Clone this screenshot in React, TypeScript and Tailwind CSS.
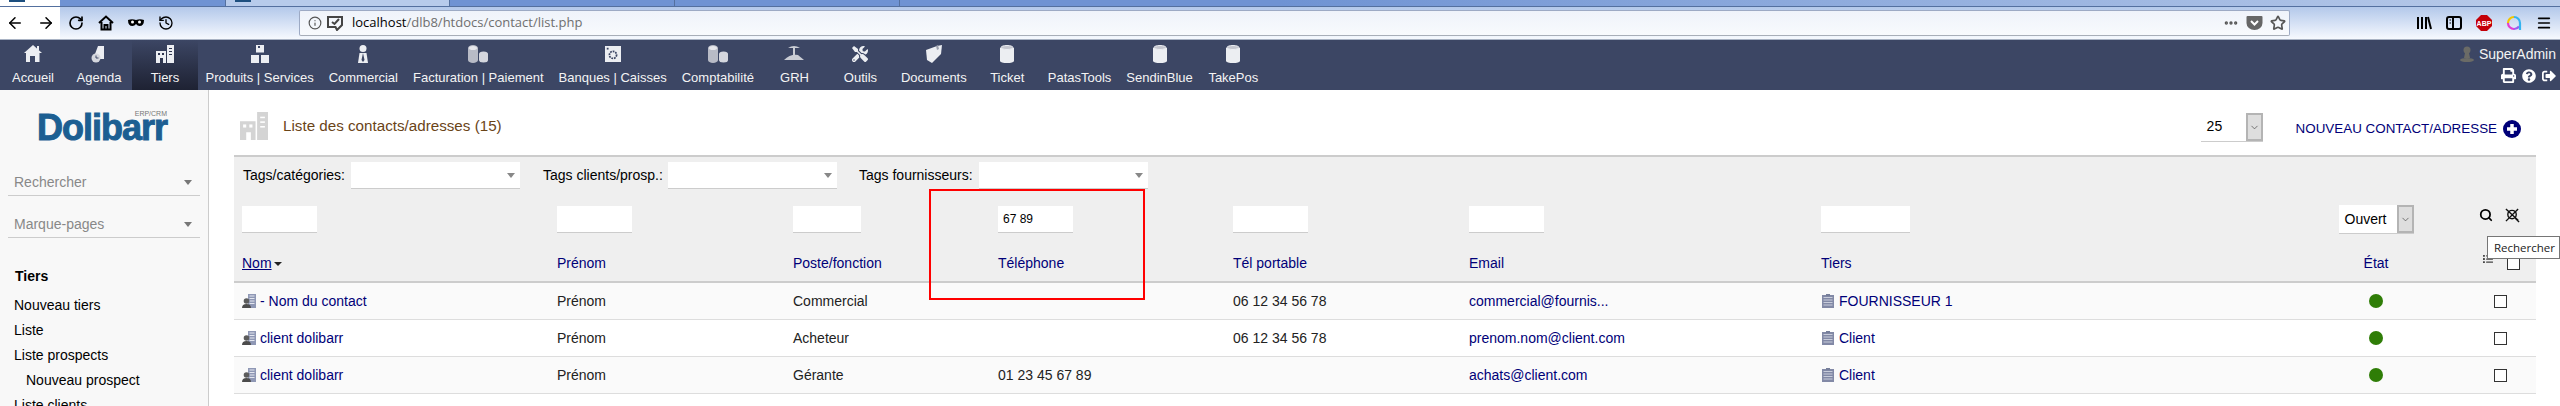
import React from 'react';
import { ArrowLeft, ArrowRight, RotateCw, History, Info, MoreHorizontal, Star, Menu, ChevronDown, Search } from 'lucide-react';
import { FaTools, FaPrint, FaQuestionCircle, FaSignOutAlt, FaList } from 'react-icons/fa';

const IconHome = () => (
  <svg viewBox="0 0 18 18" className="w-[18px] h-[18px]" fill="#eceef2">
    <path d="M9 0 18 8h-2.500v9H11v-6H6v6H2V8H0z" />
    <rect x="13" y="1" width="2" height="4" />
  </svg>
);

const IconAgenda = () => (
  <svg viewBox="0 0 18 18" className="w-[18px] h-[18px]" fill="#eceef2">
    <path d="M8 1h6v13H9a5 5 0 0 0-4-5z" />
    <circle cx="6" cy="13" r="4.500" fill="#d5d7de" />
    <path d="M6 10.500V13h2.500" fill="none" stroke="#3c4664" />
  </svg>
);

const IconTiers = ({ fill = '#eceef2', cut = '#3c4664' }: { fill?: string; cut?: string }) => (
  <svg viewBox="0 0 18 18" className="w-[18px] h-[18px]" fill={fill}>
    <path d="M0 6h10v12H7v-5H4v5H0z" />
    <rect x="11" y="0" width="7" height="18" />
    <rect x="2" y="8" width="2" height="2" fill={cut} />
    <rect x="6" y="8" width="2" height="2" fill={cut} />
    <rect x="13" y="3" width="3" height="1" fill={cut} />
    <rect x="13" y="6" width="3" height="1" fill={cut} />
    <rect x="13" y="9" width="3" height="1" fill={cut} />
  </svg>
);

const IconProducts = () => (
  <svg viewBox="0 0 18 18" className="w-[18px] h-[18px]" fill="#eceef2">
    <rect x="5" y="0" width="8" height="7.500" />
    <rect x="0" y="10" width="8" height="8" />
    <rect x="10" y="10" width="8" height="8" />
    <rect x="7" y="1" width="2" height="2" fill="#3c4664" />
  </svg>
);

const IconCommercial = () => (
  <svg viewBox="0 0 18 18" className="w-[18px] h-[18px]" fill="#eceef2">
    <circle cx="9" cy="3.500" r="3.500" />
    <path d="M5.500 8h7l1.500 10H4z" />
    <path d="M9 8l1.500 7L9 17l-1.500-2z" fill="#3c4664" />
  </svg>
);

const IconCoins = () => (
  <svg viewBox="0 0 20 18" className="w-[20px] h-[18px]" fill="#b8bbc6">
    <path d="M0 3a5 3 0 0 1 10 0v12a5 3 0 0 1-10 0z" />
    <path d="M11 9a4.500 2.500 0 0 1 9 0v6a4.500 2.500 0 0 1-9 0z" fill="#d5d7de" />
    <ellipse cx="5" cy="3" rx="4" ry="2" fill="#e6e7ec" />
  </svg>
);

const IconBank = () => (
  <svg viewBox="0 0 18 18" className="w-[16px] h-[16px]">
    <rect width="18" height="18" fill="#eceef2" />
    <circle cx="9" cy="10" r="4" fill="none" stroke="#3c4664" strokeWidth="2" strokeDasharray="2 1" />
    <rect x="2" y="2" width="2" height="2" fill="#3c4664" />
  </svg>
);

const IconIsland = () => (
  <svg viewBox="0 0 20 18" className="w-[20px] h-[18px]" fill="#c9ccd4">
    <path d="M4 3Q10-1 16 3l-5 0-1 3-1-3z" />
    <rect x="9" y="3" width="2" height="7" />
    <path d="M0 15Q6 9 14 10l6 5z" />
  </svg>
);

const IconFolder = () => (
  <svg viewBox="0 0 18 18" className="w-[18px] h-[18px]" fill="#eceef2">
    <path d="M1 5 12 1l5-1-1 9-9 9-5-3z" />
    <path d="M11 1l2-1 1 4-2 1z" fill="#9da1ae" />
  </svg>
);

const IconCylinder = () => (
  <svg viewBox="0 0 14 18" className="w-[14px] h-[18px]">
    <path d="M0 3v13a7 2 0 0 0 14 0V3z" fill="#eceef2" />
    <ellipse cx="7" cy="2.500" rx="6" ry="2" fill="#c4c6cf" stroke="#eceef2" />
  </svg>
);

const navItems: { label: string; icon?: React.ReactNode; active?: boolean }[] = [
  { label: 'Accueil', icon: <IconHome /> },
  { label: 'Agenda', icon: <IconAgenda /> },
  { label: 'Tiers', icon: <IconTiers cut="#2f3650" />, active: true },
  { label: 'Produits | Services', icon: <IconProducts /> },
  { label: 'Commercial', icon: <IconCommercial /> },
  { label: 'Facturation | Paiement', icon: <IconCoins /> },
  { label: 'Banques | Caisses', icon: <IconBank /> },
  { label: 'Comptabilité', icon: <IconCoins /> },
  { label: 'GRH', icon: <IconIsland /> },
  { label: 'Outils', icon: <FaTools className="w-[16px] h-[16px] text-[#eceef2]" /> },
  { label: 'Documents', icon: <IconFolder /> },
  { label: 'Ticket', icon: <IconCylinder /> },
  { label: 'PatasTools' },
  { label: 'SendinBlue', icon: <IconCylinder /> },
  { label: 'TakePos', icon: <IconCylinder /> },
];

const IconContact = () => (
  <svg viewBox="0 0 14 14" className="w-[14px] h-[14px] shrink-0">
    <rect x="6" y="0" width="8" height="14" fill="#8f98b5" />
    <path d="M7.500 2h5M7.500 4.500h5M7.500 7h5M7.500 9.500h5" stroke="#e4e7f0" />
    <circle cx="4.500" cy="7" r="2.800" fill="#5c5c5c" />
    <path d="M0 14q0-4 4.500-4T9 14z" fill="#4c4c4c" />
  </svg>
);

const IconCompany = () => (
  <svg viewBox="0 0 14 14" className="w-[14px] h-[14px] shrink-0">
    <rect x="1" y="1" width="12" height="13" fill="#8289a6" />
    <path d="M2.500 3.500h9M2.500 6h9M2.500 8.500h9M2.500 11h9" stroke="#c9cddb" />
    <rect x="5" y="0" width="4" height="2" fill="#767e9a" />
  </svg>
);

const FakeSelect = ({ className }: { className: string }) => (
  <div className={`bg-white border-b border-[#ccc] h-[27px] flex items-center justify-end pr-[5px] ${className}`}>
    <div className="w-0 h-0 border-x-[4px] border-x-transparent border-t-[5px] border-t-[#888]" />
  </div>
);

const FilterInput = ({ value, className = 'w-[75px]' }: { value?: string; className?: string }) => (
  <div className={`bg-white border-b border-[#ccc] h-[27px] pl-[5px] text-[12px] leading-[27px] text-black ${className}`}>{value}</div>
);

const SelectArrow = () => (
  <div className="w-[17px] self-stretch bg-[#dedede] border-2 border-[#b4b4b4] flex items-center justify-center">
    <ChevronDown className="w-[11px] h-[11px] text-[#444]" strokeWidth={1.5} />
  </div>
);

const Checkbox = () => <div className="w-[13px] h-[13px] border border-[#333] bg-white" />;

const Dot = () => <div className="w-[14px] h-[14px] rounded-full bg-[#2f7d07]" />;

const gridCols = 'grid grid-cols-[315px_236px_205px_235px_236px_352px_505px_100px_102px] items-center';

const headers = ['Prénom', 'Poste/fonction', 'Téléphone', 'Tél portable', 'Email', 'Tiers'];

const rows = [
  { nom: '- Nom du contact', poste: 'Commercial', tel: '', portable: '06 12 34 56 78', email: 'commercial@fournis...', tiers: 'FOURNISSEUR 1' },
  { nom: 'client dolibarr', poste: 'Acheteur', tel: '', portable: '06 12 34 56 78', email: 'prenom.nom@client.com', tiers: 'Client' },
  { nom: 'client dolibarr', poste: 'Gérante', tel: '01 23 45 67 89', portable: '', email: 'achats@client.com', tiers: 'Client' },
];

const BrowserBar = () => (
  <div className="h-[40px] shrink-0 flex flex-col border-b border-[#a9b3c4]">
    <div className="h-[7px] flex shrink-0 bg-gradient-to-r from-[#6f93d3] via-[#6f93d3] to-[#b9cbe9] border-b border-[#54709f]">
      <div className="w-[60px] bg-white pl-[9px]"><div className="w-[16px] h-[2px] bg-[#1d4f7f]" /></div>
      <div className="w-[165px]" />
      <div className="w-[225px] bg-[#b7cbeb] pl-[9px] border-x border-[#54709f]"><div className="w-[16px] h-[2px] bg-[#1d4f7f]" /></div>
      <div className="w-[225px] border-r border-[#54709f]" />
      <div className="w-[225px] border-r border-[#54709f]" />
    </div>
    <div className="flex-1 flex items-center bg-gradient-to-b from-[#b3c8ea] to-[#f6f9fe] text-black relative">
      <div className="w-[60px] self-stretch bg-white flex items-center gap-[13px] pl-[6px]">
        <ArrowLeft className="w-[18px] h-[18px]" strokeWidth={2} />
        <ArrowRight className="w-[18px] h-[18px]" strokeWidth={2} />
      </div>
      <div className="flex items-center gap-[14px] pl-[8px]">
        <RotateCw className="w-[16px] h-[16px]" strokeWidth={2.500} />
        <svg viewBox="0 0 16 16" className="w-[16px] h-[16px]" fill="none" stroke="black" strokeWidth="2">
          <path d="M1 8 8 1.500 15 8M3.500 7v7.500h9V7M6.500 14.500V10h3v4.500" />
        </svg>
        <svg viewBox="0 0 16 16" className="w-[16px] h-[16px]" fill="black">
          <path d="M0 5q4-1.500 8 0 4-1.500 8 0 0 6-4.500 6Q9.500 11 8 9q-1.500 2-3.500 2Q0 11 0 5z" />
          <circle cx="4.500" cy="7" r="1.500" fill="white" />
          <circle cx="11.500" cy="7" r="1.500" fill="white" />
        </svg>
        <History className="w-[16px] h-[16px]" strokeWidth={2} />
      </div>
      <div className="ml-[125px] flex-1 h-[26px] bg-gradient-to-b from-[#eff3fa] to-[#f8fafd] border border-[#9daac4] border-b-[#a8aeb8] rounded-[2px] flex items-center pl-[8px] pr-[3px]">
        <Info className="w-[14px] h-[14px] text-[#555]" strokeWidth={2} />
        <svg viewBox="0 0 16 16" className="w-[16px] h-[16px] ml-[5px]">
          <path d="M1 2h14v8l-5 5-1.500-3H1z" fill="none" stroke="#444" strokeWidth="2" />
          <path d="M5 7l2.500 2L12 4" fill="none" stroke="#444" strokeWidth="2" />
        </svg>
        <div className="ml-[9px] text-[13px] font-['Open_Sans','Noto_Sans',sans-serif] text-[#6f6f6f]">
          <span className="text-black">localhost</span>/dlb8/htdocs/contact/list.php
        </div>
        <div className="ml-auto flex items-center gap-[7px]">
          <MoreHorizontal className="w-[16px] h-[16px] text-[#555]" strokeWidth={3} />
          <svg viewBox="0 0 16 16" className="w-[17px] h-[16px]">
            <path d="M1 1h14a1 1 0 0 1 1 1v6a8 7 0 0 1-16 0V2a1 1 0 0 1 1-1z" fill="#666" />
            <path d="M4.500 6 8 9.500 11.500 6" fill="none" stroke="white" strokeWidth="2" />
          </svg>
          <Star className="w-[16px] h-[16px] text-[#555]" strokeWidth={2.500} />
        </div>
      </div>
      <div className="ml-[126px] flex items-center gap-[14px] pr-[8px]">
        <svg viewBox="0 0 16 16" className="w-[16px] h-[16px]" fill="none" stroke="black" strokeWidth="2">
          <path d="M2 2v12M6 2v12M10 2v12M12 2l3 12" />
        </svg>
        <svg viewBox="0 0 16 16" className="w-[16px] h-[16px]" fill="none" stroke="black" strokeWidth="2">
          <rect x="1" y="2" width="14" height="12" rx="2" />
          <path d="M7 2v12" />
          <path d="M3.500 5H5M3.500 8H5" strokeWidth="1" />
        </svg>
        <svg viewBox="0 0 16 16" className="w-[16px] h-[16px]">
          <path d="M5 0h6l5 5v6l-5 5H5l-5-5V5z" fill="#c40008" />
          <text x="8" y="10.500" textAnchor="middle" fontSize="7" fontWeight="700" fill="white" fontFamily="Liberation Sans">ABP</text>
        </svg>
        <svg viewBox="0 0 16 16" className="w-[16px] h-[16px]" fill="none" strokeWidth="2.200">
          <path d="M8 2A6 6 0 0 0 2 8" stroke="#f3c500" />
          <path d="M2 8a6 6 0 0 0 6 6" stroke="#e23fd0" />
          <path d="M8 14a6 6 0 0 0 5-2.500" stroke="#9b5cf0" />
          <path d="M8 2a6 6 0 0 1 6 6v7" stroke="#33b4f0" />
        </svg>
        <Menu className="w-[16px] h-[16px]" strokeWidth={2.500} />
      </div>
    </div>
  </div>
);

const TopNav = () => (
  <div className="h-[50px] shrink-0 bg-[#3c4664] flex text-white">
    {navItems.map((item, i) => (
      <div
        key={i}
        className={`min-w-[66px] px-[7.500px] flex flex-col items-center ${item.active ? 'bg-gradient-to-b from-[#3c4664] to-[#1e2233]' : ''}`}
      >
        <div className="h-[18px] mt-[5px] flex items-center justify-center">{item.icon}</div>
        <div className="mt-[7px] text-[13px] leading-[16px] whitespace-nowrap text-[#f4f4f4]">{item.label}</div>
      </div>
    ))}
    <div className="ml-auto pr-[4px] flex flex-col items-end">
      <div className="mt-[5px] flex items-center gap-[5px] h-[18px]">
        <svg viewBox="0 0 14 16" className="w-[14px] h-[16px]" fill="#6b6b66">
          <circle cx="7" cy="4" r="3.500" />
          <path d="M5 7h4l1 5H4z" />
          <ellipse cx="7" cy="14" rx="7" ry="2" />
        </svg>
        <span className="text-[14px] leading-[18px] text-[#f4f4f4]">SuperAdmin</span>
      </div>
      <div className="mt-[5px] flex items-center gap-[6px] text-white">
        <FaPrint className="w-[15px] h-[15px]" />
        <FaQuestionCircle className="w-[14px] h-[14px]" />
        <FaSignOutAlt className="w-[14px] h-[14px]" />
      </div>
    </div>
  </div>
);

const Sidebar = () => (
  <div className="w-[209px] shrink-0 bg-[#f8f8f8] border-r border-[#ccc] pt-[22px] text-[14px] text-black">
    <div className="relative h-[32px] w-[130px] ml-[37px]">
      <div className="text-[36px] leading-[32px] font-bold tracking-[-1px] text-[#1c5f92] [-webkit-text-stroke:1px_#1c5f92] whitespace-nowrap">Dolibarr</div>
      <div className="absolute right-0 -top-[2px] text-[7px] leading-[8px] text-[#777]">ERP/CRM</div>
    </div>
    <div className="mx-[8px] mt-[23px] h-[29px] border-b border-[#ccc] flex items-center justify-between pl-[6px] pr-[8px] pt-[3px] text-[#888]">
      <span>Rechercher</span>
      <div className="w-0 h-0 border-x-[4px] border-x-transparent border-t-[5px] border-t-[#777]" />
    </div>
    <div className="mx-[8px] mt-[13px] h-[29px] border-b border-[#ccc] flex items-center justify-between pl-[6px] pr-[8px] pt-[3px] text-[#888]">
      <span>Marque-pages</span>
      <div className="w-0 h-0 border-x-[4px] border-x-transparent border-t-[5px] border-t-[#777]" />
    </div>
    <div className="mt-[28px] pl-[15px] font-bold leading-[20px]">Tiers</div>
    <div className="mt-[7px] pl-[14px] leading-[25px]">
      <div>Nouveau tiers</div>
      <div>Liste</div>
      <div>Liste prospects</div>
      <div className="pl-[12px]">Nouveau prospect</div>
      <div>Liste clients</div>
    </div>
  </div>
);

const ListTable = () => (
  <div className="ml-[25px] mr-[24px] relative text-[14px]">
    <div className="h-[65px] flex items-center">
      <div className="ml-[6px] mt-[6px] w-[28px] h-[28px] [&>svg]:w-[28px] [&>svg]:h-[28px]">
        <IconTiers fill="#d4d4d4" cut="white" />
      </div>
      <div className="ml-[15px] mt-[7px] text-[#6a4418] text-[15.200px]">Liste des contacts/adresses (15)</div>
      <div className="ml-auto flex items-stretch h-[29px] w-[62px] border-b border-[#ccc] mt-[10px]">
        <span className="flex-1 pl-[6px] leading-[27px] text-black">25</span>
        <SelectArrow />
      </div>
      <div className="ml-[33px] text-[#000078] text-[13.400px] mt-[13px]">NOUVEAU CONTACT/ADRESSE</div>
      <svg viewBox="0 0 18 18" className="w-[18px] h-[18px] ml-[6px] mr-[15px] mt-[13px]">
        <circle cx="9" cy="9" r="9" fill="#000078" />
        <path d="M9 4v10M4 9h10" stroke="white" strokeWidth="3.500" />
      </svg>
    </div>

    <div className="bg-[#efefef] border-t-2 border-[#ccc] border-b-2 border-b-[#ccc] text-black">
      <div className="flex items-center mt-[5px] pl-[9px]">
        <span className="w-[108px] whitespace-nowrap">Tags/catégories:</span>
        <FakeSelect className="w-[169px] mr-[23px]" />
        <span className="w-[125px] whitespace-nowrap">Tags clients/prosp.:</span>
        <FakeSelect className="w-[169px] mr-[22px]" />
        <span className="w-[120px] whitespace-nowrap">Tags fournisseurs:</span>
        <FakeSelect className="w-[169px]" />
      </div>

      <div className={`${gridCols} pl-[8px] mt-[16px]`}>
        <FilterInput />
        <FilterInput />
        <FilterInput className="w-[68px]" />
        <FilterInput value="67 89" />
        <FilterInput />
        <FilterInput />
        <FilterInput className="w-[89px]" />
        <div className="flex justify-center">
          <div className="flex items-stretch w-[75px] h-[29px] bg-white border-b border-[#ccc]">
            <span className="flex-1 pl-[6px] leading-[29px]">Ouvert</span>
            <SelectArrow />
          </div>
        </div>
        <div className="flex items-center pl-[53px] gap-[12px] -mt-[9px]">
          <Search className="w-[14px] h-[14px] text-black" strokeWidth={3} />
          <svg viewBox="0 0 16 16" className="w-[15px] h-[15px]" fill="none" stroke="#111" strokeWidth="1.500">
            <circle cx="7.500" cy="7" r="4.500" />
            <path d="M1 1l13 12M14 1 1 14M11 11l4 4" />
          </svg>
        </div>
      </div>

      <div className={`${gridCols} pl-[8px] h-[47px] pt-[11px] text-[#000078]`}>
        <div className="flex items-center">
          <span className="underline">Nom</span>
          <div className="ml-[2px] mt-[2px] w-0 h-0 border-x-[4px] border-x-transparent border-t-[4px] border-t-[#222]" />
        </div>
        {headers.map((h) => (
          <div key={h}>{h}</div>
        ))}
        <div className="text-center">État</div>
        <div className="flex items-start pl-[55px] gap-[12px]">
          <FaList className="w-[14px] h-[10px] text-[#444] -mt-[3px]" />
          <Checkbox />
        </div>
      </div>
    </div>

    {rows.map((row, i) => (
      <div key={i} className={`${gridCols} pl-[8px] h-[37px] border-b border-[#ddd] text-[#222] ${i % 2 === 0 ? 'bg-[#fafafa]' : 'bg-white'}`}>
        <div className="flex items-center gap-[4px] text-[#000078]">
          <IconContact />
          {row.nom}
        </div>
        <div>Prénom</div>
        <div>{row.poste}</div>
        <div>{row.tel}</div>
        <div>{row.portable}</div>
        <div className="text-[#000078]">{row.email}</div>
        <div className="flex items-center gap-[4px] text-[#000078]">
          <IconCompany />
          {row.tiers}
        </div>
        <div className="flex justify-center"><Dot /></div>
        <div className="pl-[68px]"><Checkbox /></div>
      </div>
    ))}
    <div className={`${gridCols} pl-[8px] h-[37px] bg-white`}>
      <div className="col-start-8 flex justify-center"><Dot /></div>
      <div className="pl-[68px]"><Checkbox /></div>
    </div>

    {/* red highlight drawn on the capture */}
    <div className="absolute left-[695px] top-[99px] w-[216px] h-[111px] border-2 border-[#f00]" />
  </div>
);

export default function App() {
  return (
    <div className="relative w-[2560px] h-[406px] overflow-hidden flex flex-col bg-white font-['Liberation_Sans',Arial,sans-serif]">
      <BrowserBar />
      <TopNav />
      <div className="flex flex-1 min-h-0">
        <Sidebar />
        <div className="flex-1 min-w-0">
          <ListTable />
        </div>
      </div>
      <div className="absolute left-[2487px] top-[236px] w-[73px] h-[23px] bg-white border border-[#767676] pl-[6px] text-[11.500px] leading-[21px] text-[#222] font-['Open_Sans',sans-serif]">
        Rechercher
      </div>
    </div>
  );
}
